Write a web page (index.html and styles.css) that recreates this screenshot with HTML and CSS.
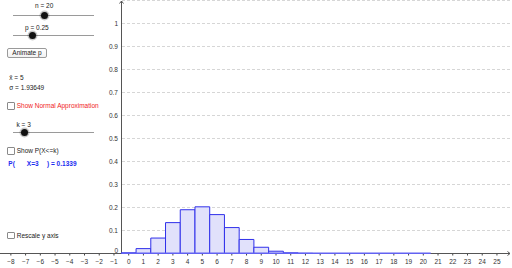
FILE: index.html
```html
<!DOCTYPE html>
<html>
<head>
<meta charset="utf-8">
<link rel="stylesheet" href="styles.css">
</head>
<body>
<div class="app">
  <svg class="graph" width="512" height="268" viewBox="0 0 512 268">
    <g class="grid">
      <line x1="122" y1="0.5" x2="512" y2="0.5"/>
      <line x1="122" y1="23.5" x2="512" y2="23.5"/>
      <line x1="122" y1="46.5" x2="512" y2="46.5"/>
      <line x1="122" y1="69.5" x2="512" y2="69.5"/>
      <line x1="122" y1="92.5" x2="512" y2="92.5"/>
      <line x1="122" y1="115.5" x2="512" y2="115.5"/>
      <line x1="122" y1="138.5" x2="512" y2="138.5"/>
      <line x1="122" y1="161.5" x2="512" y2="161.5"/>
      <line x1="122" y1="184.5" x2="512" y2="184.5"/>
      <line x1="122" y1="207.5" x2="512" y2="207.5"/>
      <line x1="122" y1="230.5" x2="512" y2="230.5"/>
    </g>
    <g class="ylabels">
      <text x="118" y="23.5">1</text>
      <text x="118" y="46.5">0.9</text>
      <text x="118" y="69.5">0.8</text>
      <text x="118" y="92.5">0.7</text>
      <text x="118" y="115.5">0.6</text>
      <text x="118" y="138.5">0.5</text>
      <text x="118" y="161.5">0.4</text>
      <text x="118" y="184.5">0.3</text>
      <text x="118" y="207.5">0.2</text>
      <text x="118" y="230.5">0.1</text>
      <text x="118" y="250.5">0</text>
    </g>
    <g class="axes">
      <line x1="121.5" y1="1" x2="121.5" y2="253.5"/>
      <polyline points="119.5,3.5 121.5,1 123.5,3.5"/>
      <line x1="0" y1="253.5" x2="510" y2="253.5"/>
      <polyline points="507.5,251.5 510,253.5 507.5,255.5"/>
    </g>
    <g class="bars" transform="translate(128.7 253.5) scale(14.73 -230.7)">
      <rect x="-0.5" y="0" width="1" height="0.003171"/>
      <rect x="0.5" y="0" width="1" height="0.021141"/>
      <rect x="1.5" y="0" width="1" height="0.066947"/>
      <rect x="2.5" y="0" width="1" height="0.133896"/>
      <rect x="3.5" y="0" width="1" height="0.189685"/>
      <rect x="4.5" y="0" width="1" height="0.202331"/>
      <rect x="5.5" y="0" width="1" height="0.168609"/>
      <rect x="6.5" y="0" width="1" height="0.112406"/>
      <rect x="7.5" y="0" width="1" height="0.060886"/>
      <rect x="8.5" y="0" width="1" height="0.027061"/>
      <rect x="9.5" y="0" width="1" height="0.009922"/>
      <rect x="10.5" y="0" width="1" height="0.003007"/>
      <rect x="11.5" y="0" width="1" height="0.000752"/>
    </g>
    <line class="base" x1="121.5" y1="253.3" x2="430.7" y2="253.3"/>
    <g class="ticks">
      <line x1="10.86" y1="254" x2="10.86" y2="255.5"/>
      <line x1="25.59" y1="254" x2="25.59" y2="255.5"/>
      <line x1="40.32" y1="254" x2="40.32" y2="255.5"/>
      <line x1="55.05" y1="254" x2="55.05" y2="255.5"/>
      <line x1="69.78" y1="254" x2="69.78" y2="255.5"/>
      <line x1="84.51" y1="254" x2="84.51" y2="255.5"/>
      <line x1="99.24" y1="254" x2="99.24" y2="255.5"/>
      <line x1="113.97" y1="254" x2="113.97" y2="255.5"/>
      <line x1="128.7" y1="254" x2="128.7" y2="255.5"/>
      <line x1="143.43" y1="254" x2="143.43" y2="255.5"/>
      <line x1="158.16" y1="254" x2="158.16" y2="255.5"/>
      <line x1="172.89" y1="254" x2="172.89" y2="255.5"/>
      <line x1="187.62" y1="254" x2="187.62" y2="255.5"/>
      <line x1="202.35" y1="254" x2="202.35" y2="255.5"/>
      <line x1="217.08" y1="254" x2="217.08" y2="255.5"/>
      <line x1="231.81" y1="254" x2="231.81" y2="255.5"/>
      <line x1="246.54" y1="254" x2="246.54" y2="255.5"/>
      <line x1="261.27" y1="254" x2="261.27" y2="255.5"/>
      <line x1="276" y1="254" x2="276" y2="255.5"/>
      <line x1="290.73" y1="254" x2="290.73" y2="255.5"/>
      <line x1="305.46" y1="254" x2="305.46" y2="255.5"/>
      <line x1="320.19" y1="254" x2="320.19" y2="255.5"/>
      <line x1="334.92" y1="254" x2="334.92" y2="255.5"/>
      <line x1="349.65" y1="254" x2="349.65" y2="255.5"/>
      <line x1="364.38" y1="254" x2="364.38" y2="255.5"/>
      <line x1="379.11" y1="254" x2="379.11" y2="255.5"/>
      <line x1="393.84" y1="254" x2="393.84" y2="255.5"/>
      <line x1="408.57" y1="254" x2="408.57" y2="255.5"/>
      <line x1="423.3" y1="254" x2="423.3" y2="255.5"/>
      <line x1="438.03" y1="254" x2="438.03" y2="255.5"/>
      <line x1="452.76" y1="254" x2="452.76" y2="255.5"/>
      <line x1="467.49" y1="254" x2="467.49" y2="255.5"/>
      <line x1="482.22" y1="254" x2="482.22" y2="255.5"/>
      <line x1="496.95" y1="254" x2="496.95" y2="255.5"/>
    </g>
    <g class="xlabels">
      <text x="10.86" y="261">−8</text>
      <text x="25.59" y="261">−7</text>
      <text x="40.32" y="261">−6</text>
      <text x="55.05" y="261">−5</text>
      <text x="69.78" y="261">−4</text>
      <text x="84.51" y="261">−3</text>
      <text x="99.24" y="261">−2</text>
      <text x="113.97" y="261">−1</text>
      <text x="128.7" y="261">0</text>
      <text x="143.43" y="261">1</text>
      <text x="158.16" y="261">2</text>
      <text x="172.89" y="261">3</text>
      <text x="187.62" y="261">4</text>
      <text x="202.35" y="261">5</text>
      <text x="217.08" y="261">6</text>
      <text x="231.81" y="261">7</text>
      <text x="246.54" y="261">8</text>
      <text x="261.27" y="261">9</text>
      <text x="276" y="261">10</text>
      <text x="290.73" y="261">11</text>
      <text x="305.46" y="261">12</text>
      <text x="320.19" y="261">13</text>
      <text x="334.92" y="261">14</text>
      <text x="349.65" y="261">15</text>
      <text x="364.38" y="261">16</text>
      <text x="379.11" y="261">17</text>
      <text x="393.84" y="261">18</text>
      <text x="408.57" y="261">19</text>
      <text x="423.3" y="261">20</text>
      <text x="438.03" y="261">21</text>
      <text x="452.76" y="261">22</text>
      <text x="467.49" y="261">23</text>
      <text x="482.22" y="261">24</text>
      <text x="496.95" y="261">25</text>
    </g>
  </svg>

  <div class="panel">
    <div class="slabel slabel-n">n = 20</div>
    <div class="slider slider-n"><span class="thumb" style="left:38.8%"></span></div>
    <div class="slabel slabel-p">p = 0.25</div>
    <div class="slider slider-p"><span class="thumb" style="left:24%"></span></div>
    <button class="btn">Animate p</button>
    <div class="stat stat-mean">x̄ = 5</div>
    <div class="stat stat-sd">σ = 1.93649</div>
    <label class="check check-normal"><span class="box"></span><span class="red">Show Normal Approximation</span></label>
    <div class="slabel slabel-k">k = 3</div>
    <div class="slider slider-k"><span class="thumb" style="left:15%"></span></div>
    <label class="check check-cdf"><span class="box"></span><span>Show P(X&lt;=k)</span></label>
    <div class="prob"><span class="p1">P(</span><span class="p2">X=3</span><span class="p3">) = 0.1339</span></div>
    <label class="check check-rescale"><span class="box"></span><span>Rescale y axis</span></label>
  </div>
</div>
</body>
</html>
```

FILE: styles.css
```css
html, body {
  margin: 0;
  padding: 0;
  background: #ffffff;
}

.app {
  position: relative;
  width: 512px;
  height: 268px;
  overflow: hidden;
  font-family: "Liberation Sans", Arial, sans-serif;
  font-size: 6.5px;
  color: #222;
}

.graph {
  position: absolute;
  left: 0;
  top: 0;
  display: block;
}

.grid line {
  stroke: #d6d6d6;
  stroke-width: 1;
  stroke-dasharray: 3 2;
}

.axes line, .axes polyline {
  stroke: #555;
  stroke-width: 1;
  fill: none;
}

.ticks line {
  stroke: #444;
  stroke-width: 1;
}

.ylabels text {
  font-family: "Liberation Sans", Arial, sans-serif;
  font-size: 6.5px;
  fill: #333;
  text-anchor: end;
  dominant-baseline: central;
}

.xlabels text {
  font-family: "Liberation Sans", Arial, sans-serif;
  font-size: 6.5px;
  fill: #333;
  text-anchor: middle;
  dominant-baseline: central;
}

.bars rect {
  fill: #e1e1fb;
  stroke: #3030ea;
  stroke-width: 1;
  vector-effect: non-scaling-stroke;
}

.base {
  stroke: #6262f2;
  stroke-width: 1.4;
}

.panel {
  position: absolute;
  left: 0;
  top: 0;
  width: 112px;
  padding-top: 1.7px;
  display: flex;
  flex-direction: column;
  align-items: flex-start;
}

.slabel {
  height: 8px;
  line-height: 8px;
  white-space: nowrap;
}
.slabel-n { margin-left: 35px; }
.slabel-p { margin-left: 25px; margin-top: 5.6px; }
.slabel-k { margin-left: 16.5px; margin-top: 10.5px; }

.slider {
  position: relative;
  width: 81.6px;
  height: 6px;
  margin-left: 12.7px;
}
.slider::before {
  content: "";
  position: absolute;
  left: 0;
  right: 0;
  top: 2.5px;
  height: 1px;
  background: #9a9a9a;
}
.slider-n { margin-top: 3px; }
.slider-p { margin-top: 0.4px; }
.slider-k { margin-top: 0.5px; }

.thumb {
  position: absolute;
  top: 3px;
  width: 7px;
  height: 7px;
  margin-left: -3.5px;
  margin-top: -3.5px;
  border-radius: 50%;
  background: #111;
  box-shadow: 0 0 0 1.5px rgba(0, 0, 0, 0.22);
}

.btn {
  margin-top: 9px;
  margin-left: 7.3px;
  width: 39.4px;
  height: 10.6px;
  padding: 0;
  font-family: "Liberation Sans", Arial, sans-serif;
  font-size: 6.5px;
  color: #222;
  background: linear-gradient(#ffffff, #f2f2f2);
  border: 1px solid #9a9a9a;
  border-radius: 2px;
  line-height: 8px;
}

.stat {
  margin-left: 9.3px;
  height: 8px;
  line-height: 8px;
  white-space: nowrap;
}
.stat-mean { margin-top: 15.4px; }
.stat-sd { margin-top: 2.3px; }

.check {
  display: flex;
  align-items: center;
  gap: 2px;
  height: 9px;
  margin-left: 7.3px;
  white-space: nowrap;
}
.check-normal { margin-top: 9.5px; }
.check-cdf { margin-top: 11px; }
.check-rescale { margin-top: 62.9px; }

.box {
  width: 7.4px;
  height: 7.4px;
  box-sizing: border-box;
  border: 1px solid #8a8a8a;
  border-radius: 1px;
  background: #fff;
}

.red {
  color: #f01c1c;
}

.prob {
  margin-top: 4.8px;
  margin-left: 8.3px;
  height: 8px;
  line-height: 8px;
  color: #1a2cf0;
  font-weight: bold;
  white-space: nowrap;
  display: flex;
}
.p2 { margin-left: 12px; }
.p3 { margin-left: 8.5px; }
```
